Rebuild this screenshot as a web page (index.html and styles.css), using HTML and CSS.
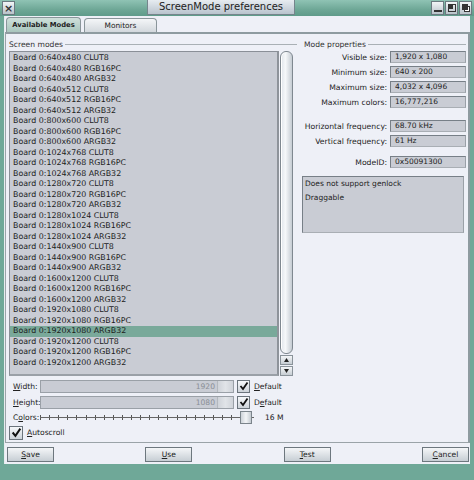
FILE: index.html
```html
<!DOCTYPE html>
<html>
<head>
<meta charset="utf-8">
<link rel="stylesheet" href="styles.css">
</head>
<body>
<div class="win">
  <div class="titlebar">
    <div class="gad close">×</div>
    <div class="tspace"></div>
    <div class="title">ScreenMode preferences</div>
    <div class="tspace"></div>
    <div class="gad"><svg width="10" height="10" viewBox="0 0 10 10"><rect x="1" y="7" width="8" height="2" fill="#333"/></svg></div>
    <div class="gad"><svg width="10" height="10" viewBox="0 0 10 10"><rect x="1.5" y="1.5" width="7" height="7" fill="none" stroke="#333"/><rect x="2" y="2" width="4" height="4" fill="#333"/></svg></div>
    <div class="gad"><svg width="10" height="10" viewBox="0 0 10 10"><rect x="3.5" y="3.5" width="5" height="5" fill="#fff" stroke="#333"/><rect x="1.5" y="1.5" width="5" height="5" fill="#333" stroke="#333"/></svg></div>
  </div>
  <div class="inner">
    <div class="tabs">
      <div class="tab active">Available Modes</div>
      <div class="tab">Monitors</div>
    </div>
    <div class="page">
      <div class="cols">
        <div class="left">
          <div class="glabel"><span>Screen modes</span><i></i></div>
          <div class="listwrap">
            <div class="list" id="list"></div>
            <div class="sbar">
              <div class="knob"></div>
              <div class="arrow"><svg width="7" height="6" viewBox="0 0 7 6"><path d="M3.5 1 L6 5 L1 5 Z" fill="#222"/></svg></div>
              <div class="arrow"><svg width="7" height="6" viewBox="0 0 7 6"><path d="M1 1 L6 1 L3.5 5 Z" fill="#222"/></svg></div>
            </div>
          </div>
          <div class="crow first">
            <span class="clabel"><u>W</u>idth:</span>
            <div class="num"><span>1920</span><b class="step"></b></div>
            <div class="chk"><svg width="10" height="10" viewBox="0 0 10 10"><path d="M1.5 5 L4 8 L8.5 1.5" fill="none" stroke="#111" stroke-width="1.8"/></svg></div>
            <span class="dlabel"><u>D</u>efault</span>
          </div>
          <div class="crow">
            <span class="clabel"><u>H</u>eight:</span>
            <div class="num"><span>1080</span><b class="step"></b></div>
            <div class="chk"><svg width="10" height="10" viewBox="0 0 10 10"><path d="M1.5 5 L4 8 L8.5 1.5" fill="none" stroke="#111" stroke-width="1.8"/></svg></div>
            <span class="dlabel">D<u>e</u>fault</span>
          </div>
          <div class="crow slrow">
            <span class="clabel">C<u>o</u>lors:</span>
            <div class="slider"><div class="track"></div><div class="sknob"></div></div>
            <span class="sval">16 M</span>
          </div>
          <div class="arow">
            <div class="chk big"><svg width="11" height="11" viewBox="0 0 10 10"><path d="M1.5 5 L4 8 L8.5 1.5" fill="none" stroke="#111" stroke-width="1.8"/></svg></div>
            <span class="alabel"><u>A</u>utoscroll</span>
          </div>
        </div>
        <div class="right">
          <div class="glabel"><span>Mode properties</span><i></i></div>
          <div class="props">
            <span class="pl">Visible size:</span><span class="pv">1,920 x 1,080</span>
            <span class="pl">Minimum size:</span><span class="pv">640 x 200</span>
            <span class="pl">Maximum size:</span><span class="pv">4,032 x 4,096</span>
            <span class="pl">Maximum colors:</span><span class="pv">16,777,216</span>
            <span class="pl gap">Horizontal frequency:</span><span class="pv gap">68.70 kHz</span>
            <span class="pl">Vertical frequency:</span><span class="pv">61 Hz</span>
            <span class="pl gap2">ModeID:</span><span class="pv gap2">0x50091300</span>
          </div>
          <div class="info">
            <div>Does not support genlock</div>
            <div>Draggable</div>
          </div>
        </div>
      </div>
    </div>
    <div class="buttons">
      <div class="btn"><u>S</u>ave</div>
      <div class="btn"><u>U</u>se</div>
      <div class="btn"><u>T</u>est</div>
      <div class="btn"><u>C</u>ancel</div>
    </div>
  </div>
  <div class="bottom"></div>
</div>
<script src="list.js"></script>
</body>
</html>
```

FILE: list.js
```js
var modes = ["640x480","640x512","800x600","1024x768","1280x720","1280x1024","1440x900","1600x1200","1920x1080","1920x1200"];
var fmts = ["CLUT8","RGB16PC","ARGB32"];
var list = document.getElementById("list");
modes.forEach(function(m){
  fmts.forEach(function(f){
    var d = document.createElement("div");
    d.className = "item" + (m === "1920x1080" && f === "ARGB32" ? " sel" : "");
    d.textContent = "Board 0:" + m + " " + f;
    list.appendChild(d);
  });
});
```

FILE: styles.css
```css
* { box-sizing: border-box; }
html, body { margin: 0; padding: 0; }
body {
  width: 474px; height: 480px; overflow: hidden;
  background: #6fa898;
  font-family: "DejaVu Sans", sans-serif;
  color: #1a1a1a;
}
.win { width: 474px; height: 480px; display: flex; flex-direction: column; }
.titlebar {
  height: 16px; display: flex; align-items: flex-start;
  background: linear-gradient(#8fc3b4, #6ea796 60%, #5f9b8a);
  padding: 1px 2px 0 2px;
}
.gad {
  width: 13px; height: 14px; margin-left: 1px;
  background: linear-gradient(#f2f5f7, #b8c2c9);
  border: 1px solid #6a7a80;
  display: flex; align-items: center; justify-content: center;
  font-size: 11px; font-weight: bold; color: #333; line-height: 1;
}
.close { margin-left: 0; }
.tspace { flex: 1; }
.title {
  width: 148px; height: 15px; margin-top: -1px; margin-right: 3px;
  background: linear-gradient(#e7ecf1, #b9c3cd);
  border: 1px solid #75858c; border-top: none;
  font-size: 10px; text-align: center; line-height: 14px; color: #222;
}
.inner {
  flex: 1; margin: 0 4px; background: #eef0f7;
  display: flex; flex-direction: column;
  border-left: 1px solid #e8ecef;
}
.tabs { height: 16px; display: flex; align-items: flex-end; padding-left: 1px; padding-top: 2px; }
.tab {
  height: 14px; width: 73px; margin-right: 3px;
  border: 1px solid #8a959a; border-bottom: none; border-radius: 4px 4px 0 0;
  background: linear-gradient(#f4f6f8, #d3d8dd);
  font-size: 7.4px; text-align: center; line-height: 13px; color: #222;
}
.tab.active {
  height: 15px; width: 75px;
  background: linear-gradient(#cfe0db, #a9c6bd);
  font-weight: bold; font-size: 6.8px; line-height: 14px;
}
.page {
  height: 411px;
  border: 1px solid #9aa3a8; border-top: 2px solid #8e9ba0;
  border-right: 2px solid #8e9ba0;
  background: #eef0f7;
}
.cols { display: flex; height: 100%; }
.left { width: 291px; padding-left: 3px; padding-top: 5px; }
.right { flex: 1; padding-top: 5px; padding-left: 2px; }
.glabel { display: flex; align-items: center; height: 10px; font-size: 7.6px; color: #333; }
.glabel i { flex: 1; height: 1px; background: #a9b0b5; margin-left: 2px; margin-top: 1px; }
.right .glabel span { margin-left: 5px; }
.right .glabel i { margin-right: 2px; }
.listwrap { display: flex; margin-top: 2px; height: 325px; }
.list {
  width: 270px; height: 325px; background: #c9ccd4;
  border: 1px solid #8a8f97; border-right: 2px solid #8e939a; border-bottom: 2px solid #9aa0a7;
  padding-top: 1px; padding-left: 2px; overflow: hidden;
}
.item { height: 10.52px; line-height: 10.52px; font-size: 7.9px; padding-left: 1px; white-space: nowrap; color: #1c1c1c; }
.item.sel { background: #79a99a; margin-left: -2px; padding-left: 3px; }
.sbar { width: 13px; margin-left: 1px; display: flex; flex-direction: column; }
.knob {
  flex: 1; border: 1px solid #7f8890; border-radius: 6px;
  background: linear-gradient(90deg, #dfe4ea, #f6f8fa 40%, #c5ccd3);
  box-shadow: inset 1px 0 0 #fff;
}
.arrow {
  height: 10px; margin-top: 1px; border: 1px solid #8a939a;
  background: linear-gradient(#f4f6f8, #c6cdd3);
  display: flex; align-items: center; justify-content: center;
}
.crow { display: flex; align-items: center; height: 16px; }
.crow.first { margin-top: 2px; }
.clabel { width: 31px; font-size: 7.6px; padding-left: 4px; color: #222; }
.num {
  width: 194px; height: 13px; background: #c9ccd4; border: 1px solid #9aa0a7;
  display: flex; align-items: center; justify-content: flex-end;
  font-size: 7.6px; color: #8a8f96;
}
.step { width: 16px; height: 11px; margin-left: 2px; background: linear-gradient(90deg,#cfd3d9,#e1e4e8,#cfd3d9); border-left: 1px solid #b3b8be; }
.chk {
  width: 13px; height: 13px; margin-left: 3px; border: 1px solid #6b747c;
  background: linear-gradient(#f6f8fa, #cdd3d9);
  display: flex; align-items: center; justify-content: center;
}
.dlabel { font-size: 7.6px; margin-left: 4px; color: #222; }
.slrow { height: 15px; }
.slider { width: 214px; height: 13px; position: relative; }
.track {
  height: 5px; margin-top: 4px;
  background-image: linear-gradient(#666,#666), repeating-linear-gradient(90deg, #555 0 1px, transparent 1px 9.1px);
  background-size: 100% 1px, 100% 5px; background-position: 0 2px, 0 0; background-repeat: no-repeat;
}
.sknob {
  position: absolute; right: 2px; top: 0; width: 12px; height: 13px;
  border: 1px solid #7b848b; background: linear-gradient(90deg, #cdd3d9, #f3f5f7, #c4cbd1);
}
.sval { font-size: 7.6px; margin-left: 11px; color: #222; }
.arow { display: flex; align-items: center; height: 15px; }
.chk.big { width: 14px; height: 14px; margin-left: 0; }
.alabel { font-size: 7.6px; margin-left: 4px; color: #222; }
.props {
  display: grid; grid-template-columns: 88px 76px; column-gap: 3px; row-gap: 3px;
  margin-top: 2px; align-items: center;
}
.pl { font-size: 7.7px; text-align: right; color: #222; white-space: nowrap; }
.pv {
  height: 12px; background: #c9ccd4; border: 1px solid #777f87; border-right-color: #9aa0a7; border-bottom-color: #a9aeb4;
  font-size: 7.5px; line-height: 10px; padding-left: 4px; color: #222;
}
.gap { margin-top: 9px; }
.gap2 { margin-top: 6px; }
.info {
  margin: 8px 0 0 3px; width: 162px; height: 57px;
  background: #c9ccd4; border: 1px solid #777f87; border-right-color: #9aa0a7; border-bottom-color: #a9aeb4;
  padding: 1px 0 0 2px; font-size: 7.5px; color: #222;
}
.info div { height: 14px; line-height: 12px; }
.buttons {
  display: flex; justify-content: space-between; padding: 4px 1px 0 2px; height: 21px;
}
.btn {
  width: 47px; height: 15px; border: 1px solid #6d777e;
  background: linear-gradient(#f4f6f8, #c7ced4);
  font-size: 7.6px; text-align: center; line-height: 13px; color: #222;
}
.bottom { height: 16px; background: #6fa898; }
```
